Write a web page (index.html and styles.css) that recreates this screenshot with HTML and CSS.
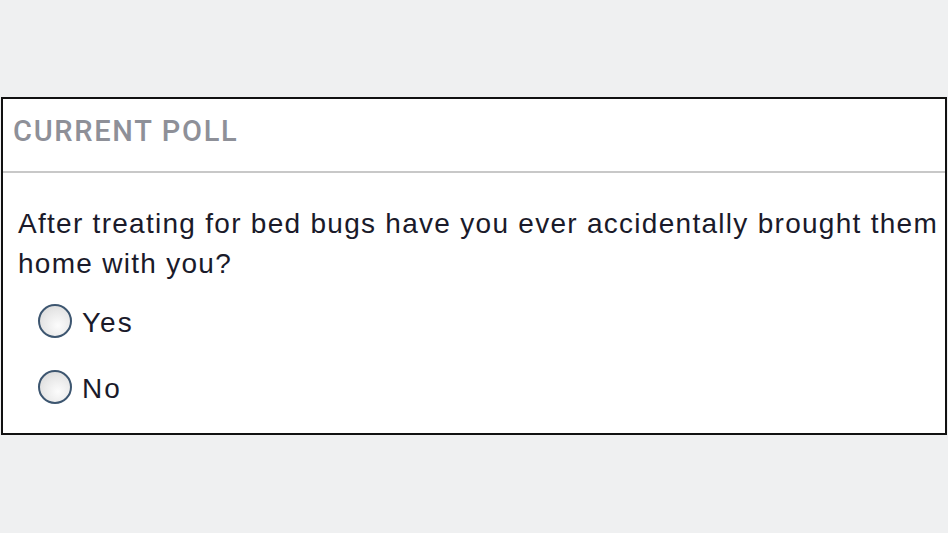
FILE: index.html
```html
<!DOCTYPE html>
<html>
<head>
<meta charset="utf-8">
<link rel="stylesheet" href="styles.css">
</head>
<body>
<div class="poll">
  <div class="poll-head">CURRENT POLL</div>
  <div class="poll-body">
    <p class="question">After treating for bed bugs have you ever accidentally brought them home with you?</p>
    <div class="options">
      <label class="option"><span class="radio"></span><span class="label">Yes</span></label>
      <label class="option"><span class="radio"></span><span class="label">No</span></label>
    </div>
  </div>
</div>
</body>
</html>
```
FILE: styles.css
```css
html, body {
  margin: 0;
  padding: 0;
  background: #eff0f1;
  width: 948px;
  height: 533px;
  overflow: hidden;
}
.poll {
  margin: 97px 0 0 1px;
  width: 946px;
  height: 338px;
  box-sizing: border-box;
  border: 2px solid #111;
  background: #fff;
  font-family: "Liberation Sans", Arial, sans-serif;
}
.poll-head {
  height: 74px;
  box-sizing: border-box;
  padding: 15px 0 0 10px;
  font-family: Roboto, "Liberation Sans", sans-serif;
  font-size: 29px;
  font-weight: 500;
  color: #8e9098;
  letter-spacing: 1.7px;
  border-bottom: 2px solid #c8c8c8;
}
.poll-body {
  padding: 0 0 0 15px;
}
.question {
  margin: 0;
  padding-top: 31px;
  font-size: 28px;
  line-height: 40px;
  letter-spacing: 1.28px;
  color: #1a1a2a;
}
.options {
  display: flex;
  flex-direction: column;
  gap: 32px;
  padding: 20px 0 0 20px;
}
.option {
  display: flex;
  align-items: center;
  gap: 10px;
  height: 34px;
  font-size: 28px;
  letter-spacing: 2px;
  color: #1a1a2a;
}
.radio {
  width: 30px;
  height: 30px;
  border-radius: 50%;
  border: 2px solid #3d5670;
  background: radial-gradient(circle at 60% 65%, #fcfcfc 0%, #e8e8e8 55%, #d4d4d4 100%);
  flex: none;
}
.label {
  padding-top: 4px;
}
```
